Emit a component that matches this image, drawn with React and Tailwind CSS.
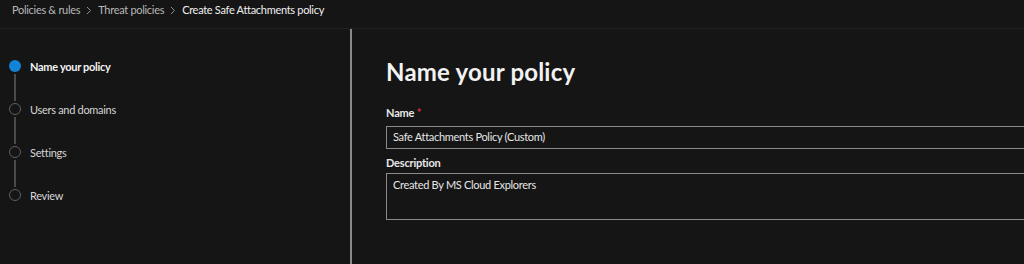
import React from "react";

const font = { fontFamily: 'Lato, "Open Sans", sans-serif' };

function Chevron() {
  return (
    <svg width="6" height="9" viewBox="0 0 6 9" className="mx-[6px] mt-[1px]" fill="none">
      <path d="M1 1l3.5 3.5L1 8" stroke="#8f8f8f" strokeWidth="1" />
    </svg>
  );
}

function Step({ label, active, last }) {
  return (
    <div className="flex flex-col">
      <div className="flex items-center h-[12px]">
        {active ? (
          <div className="w-[12px] h-[12px] rounded-full bg-[#1383d8] ml-[9px]" />
        ) : (
          <div className="w-[12px] h-[12px] rounded-full border-[1.5px] border-[#5f5f5f] ml-[9px]" />
        )}
        <span
          className={`ml-[9px] text-[11px] tracking-[-0.3px] leading-none ${active ? "font-bold text-[#f2f2f2]" : "text-[#d6d6d6]"}`}
        >
          {label}
        </span>
      </div>
      {!last && <div className="ml-[14px] w-[2px] h-[27px] my-[2px] bg-[#4a4a4a]" />}
    </div>
  );
}

export default function App() {
  return (
    <div className="w-[1024px] h-[264px] bg-[#151515] overflow-hidden flex flex-col" style={font}>
      <div className="h-[29px] shrink-0 border-b border-[#222222] flex items-center pl-[12px] pb-[8px] text-[11px] tracking-[-0.3px]">
        <span className="text-[#b8b8b8]">Policies &amp; rules</span>
        <Chevron />
        <span className="text-[#b8b8b8]">Threat policies</span>
        <Chevron />
        <span className="text-[#f0f0f0]">Create Safe Attachments policy</span>
      </div>
      <div className="flex flex-1">
        <div className="w-[352px] shrink-0 border-r-[2px] border-[#8a8a8a] pt-[31px]">
          <Step label="Name your policy" active />
          <Step label="Users and domains" />
          <Step label="Settings" />
          <Step label="Review" last />
        </div>
        <div className="flex-1 pl-[34px] pt-[27px]">
          <h1 className="text-[24px] font-bold text-[#f2f2f2] leading-[32px] tracking-[0.2px]">Name your policy</h1>
          <div className="mt-[17px] text-[11px] tracking-[-0.2px] font-bold text-[#e8e8e8] leading-[16px]">
            Name <span className="text-[#d13438]">*</span>
          </div>
          <div className="mt-[5px] w-[680px] h-[23px] border border-[#8a8a8a] flex items-center pl-[6px] text-[11px] tracking-[-0.3px] text-[#e6e6e6]">
            Safe Attachments Policy (Custom)
          </div>
          <div className="mt-[6px] text-[11px] tracking-[-0.2px] font-bold text-[#e8e8e8] leading-[16px]">Description</div>
          <div className="mt-[2px] w-[680px] h-[47px] border border-[#8a8a8a] pl-[6px] pt-[3px] text-[11px] tracking-[-0.3px] text-[#e6e6e6]">
            Created By MS Cloud Explorers
          </div>
        </div>
      </div>
    </div>
  );
}
